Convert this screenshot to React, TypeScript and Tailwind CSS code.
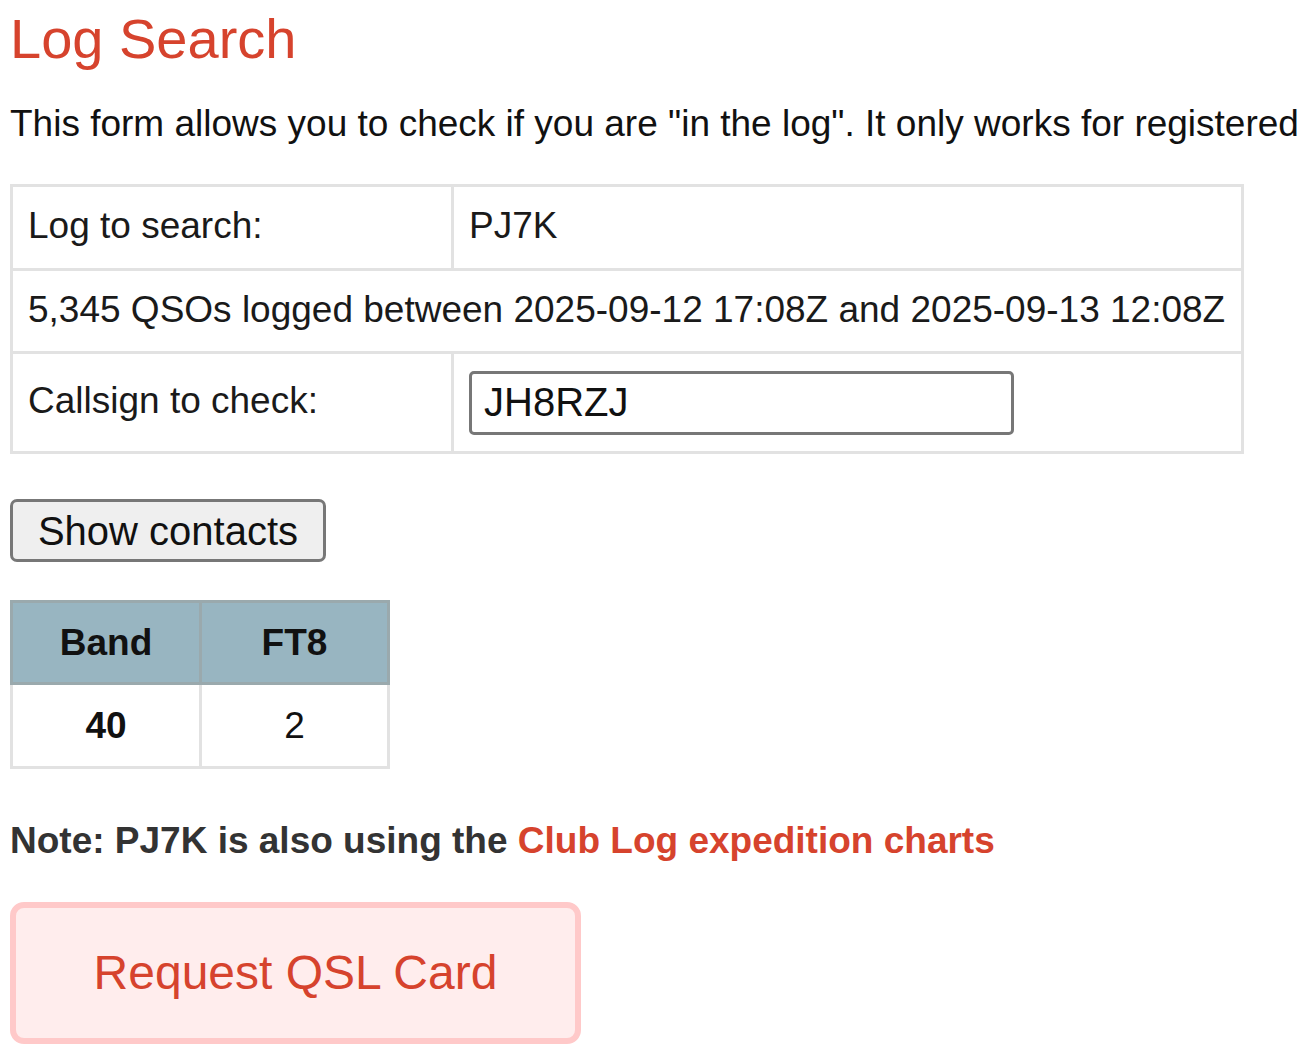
import React from "react";

export default function App() {
  return (
    <div
      className="w-[1300px] h-[1063px] overflow-hidden bg-white pl-[10px] text-[#111]"
      style={{ fontFamily: '"Liberation Sans", Arial, sans-serif' }}
    >
      <h1 className="mt-[11px] text-[56px] leading-[56px] font-normal text-[#d6432d]">Log Search</h1>
      <p className="mt-[38px] text-[37px] leading-[37px] whitespace-nowrap">
        This form allows you to check if you are "in the log". It only works for registered
      </p>

      <table className="mt-[42px] border-collapse border-[3px] border-[#e2e2e2] text-[37px] leading-[37px] text-[#1a1a1a]">
        <tbody>
          <tr className="h-[84px]">
            <td className="w-[441px] border-[3px] border-[#e2e2e2] pl-[15px] pb-[4px] align-middle">Log to search:</td>
            <td className="w-[790px] border-[3px] border-[#e2e2e2] pl-[15px] pb-[4px] align-middle">PJ7K</td>
          </tr>
          <tr className="h-[83px]">
            <td colSpan={2} className="border-[3px] border-[#e2e2e2] pl-[15px] pb-[4px] align-middle">
              5,345 QSOs logged between 2025-09-12 17:08Z and 2025-09-13 12:08Z
            </td>
          </tr>
          <tr className="h-[100px]">
            <td className="border-[3px] border-[#e2e2e2] pl-[15px] pb-[4px] align-middle">Callsign to check:</td>
            <td className="border-[3px] border-[#e2e2e2] pl-[15px] align-middle">
              <input
                type="text"
                defaultValue="JH8RZJ"
                className="block w-[545px] h-[64px] border-[3px] border-[#777] rounded-[5px] px-[12px] text-[40px] text-[#111] bg-white outline-none"
                style={{ fontFamily: '"Liberation Sans", Arial, sans-serif' }}
              />
            </td>
          </tr>
        </tbody>
      </table>

      <button
        className="mt-[45px] block w-[316px] h-[63px] border-[3px] border-[#777] rounded-[7px] bg-[#efefef] text-[40px] leading-[40px] text-[#111]"
        style={{ fontFamily: '"Liberation Sans", Arial, sans-serif' }}
      >
        Show contacts
      </button>

      <table className="mt-[38px] border-collapse text-[37px] leading-[37px] text-[#111]">
        <thead>
          <tr className="h-[82px] bg-[#98b5c1]">
            <th className="w-[189px] border-[3px] border-[#9aa9ad] font-bold text-center align-middle">Band</th>
            <th className="w-[188px] border-[3px] border-[#9aa9ad] font-bold text-center align-middle">FT8</th>
          </tr>
        </thead>
        <tbody>
          <tr className="h-[84px]">
            <td className="border-[3px] border-[#e2e2e2] font-bold text-center align-middle">40</td>
            <td className="border-[3px] border-[#e2e2e2] text-center align-middle">2</td>
          </tr>
        </tbody>
      </table>

      <p className="mt-[53px] text-[37px] leading-[37px] font-bold text-[#333] whitespace-nowrap">
        Note: PJ7K is also using the <a href="#" className="text-[#d6432d]">Club Log expedition charts</a>
      </p>

      <div className="mt-[43px] flex items-center justify-center w-[571px] h-[142px] border-[6px] border-[#ffc9c9] rounded-[14px] bg-[#ffeded] text-[48px] leading-[48px] text-[#d6432d]">
        Request QSL Card
      </div>
    </div>
  );
}
